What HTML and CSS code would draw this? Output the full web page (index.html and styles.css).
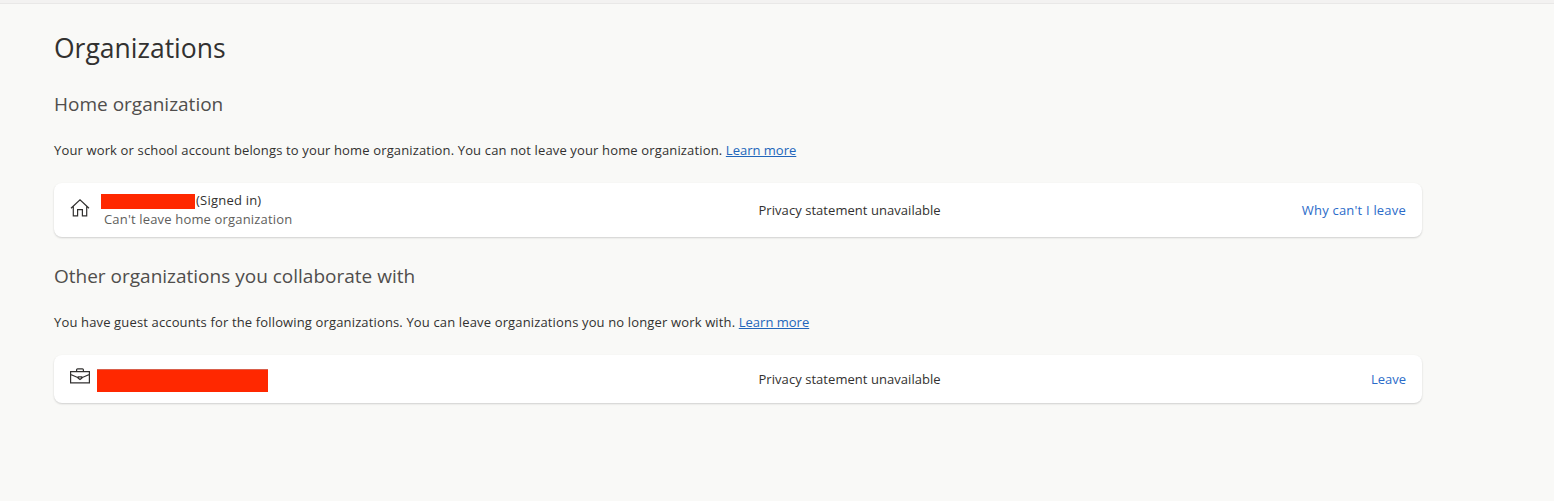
FILE: index.html
```html
<!DOCTYPE html>
<html lang="en">
<head>
    <meta charset="utf-8">
    <title>Organizations</title>
    <link rel="stylesheet" href="styles.css">
</head>
<body>
    <div class="topbar"></div>
    <main class="page">
        <h1 class="title">Organizations</h1>

        <!-- home organization -->
        <section class="section">
            <h2 class="subtitle">Home organization</h2>
            <p class="desc">Your work or school account belongs to your home organization. You can not leave your home organization. <a class="more" href="#">Learn more</a></p>
            <div class="card card-home">
                <div class="org">
                    <svg class="icon-home" width="20" height="18" viewBox="0 0 20 18" fill="none" stroke="#323130" stroke-width="1.2">
                        <path d="M1 9.2 10 .9l9 8.3M3.3 7.3v9.6h4.3v-6.3h4.8v6.3h4.3V7.3"/>
                    </svg>
                    <div class="org-text">
                        <div class="org-name"><span class="redacted"></span><span class="signed">(Signed in)</span></div>
                        <div class="note">Can't leave home organization</div>
                    </div>
                </div>
                <div class="privacy">Privacy statement unavailable</div>
                <a class="action action-why" href="#">Why can't I leave</a>
            </div>
        </section>

        <!-- guest organizations -->
        <section class="section section-guest">
            <h2 class="subtitle">Other organizations you collaborate with</h2>
            <p class="desc">You have guest accounts for the following organizations. You can leave organizations you no longer work with. <a class="more" href="#">Learn more</a></p>
            <div class="card card-guest">
                <div class="org">
                    <svg class="icon-case" width="20" height="16" viewBox="0 0 20 16" fill="none" stroke="#323130" stroke-width="1.2">
                        <path d="M.6 3.6h18.8v11.3H.6zM6.6 3.5V1.8q0-1 1-1h4.8q1 0 1 1v1.7M.7 6.5l7.6 3.3M19.3 6.5l-7.6 3.3"/>
                        <path d="M8.2 8.8h3.6v1.3L10 11.4l-1.8-1.3z"/>
                    </svg>
                    <span class="redacted redacted-big"></span>
                </div>
                <div class="privacy">Privacy statement unavailable</div>
                <a class="action" href="#">Leave</a>
            </div>
        </section>
    </main>
</body>
</html>
```
FILE: styles.css
```css
* {
    box-sizing: border-box;
    margin: 0;
    padding: 0;
}

body {
    background: #f9f9f7;
    color: #323130;
    font-family: "Segoe UI", "Open Sans", "Noto Sans", sans-serif;
    font-size: 13px;
    line-height: 20px;
}

.topbar {
    height: 4px;
    background: #f3f2f1;
    border-bottom: 1px solid #e9e8e7;
}

.page {
    width: 1422px;
    padding: 26px 0 40px 54px;
}

.title {
    height: 36px;
    font-size: 26.5px;
    font-weight: 400;
    line-height: 37px;
}

.section {
    padding-top: 24px;
}

.section-guest {
    padding-top: 25px;
}

.subtitle {
    height: 28px;
    color: #504e4c;
    font-size: 19px;
    font-weight: 400;
    line-height: 28px;
}

.desc {
    padding-top: 22px;
    height: 42px;
    letter-spacing: .145px;
}

.more {
    color: #2266bb;
    letter-spacing: 0;
    text-decoration: underline;
}

.card {
    display: grid;
    grid-template-columns: 688px 1fr auto;
    align-items: center;
    margin-top: 23px;
    padding: 0 16px;
    background: #fff;
    border-radius: 8px;
    box-shadow: 0 1px 2px rgba(0, 0, 0, .17);
}

.card-home {
    height: 54px;
}

.card-guest {
    height: 48px;
}

.org {
    display: flex;
    align-items: flex-start;
    height: 100%;
}

.icon-home {
    margin-top: 16px;
}

.icon-case {
    margin-top: 13px;
}

.org-text {
    padding: 9px 0 0 11px;
}

.org-name {
    display: flex;
    align-items: flex-start;
    height: 18px;
}

.redacted {
    width: 94px;
    height: 15px;
    margin-top: 2px;
    background: #ff2800;
}

.redacted-big {
    width: 171px;
    height: 23px;
    margin: 14px 0 0 7px;
    border-top: 1px solid #d9604c;
}

.signed {
    margin-left: 1px;
    letter-spacing: .22px;
    line-height: 17px;
}

.note {
    padding-left: 3px;
    color: #605e5c;
    letter-spacing: .17px;
    line-height: 19px;
}

.privacy {
    padding-left: .5px;
    letter-spacing: .05px;
}

.action {
    color: #2b6bc9;
    text-decoration: none;
}

.action-why {
    letter-spacing: .2px;
}
```
